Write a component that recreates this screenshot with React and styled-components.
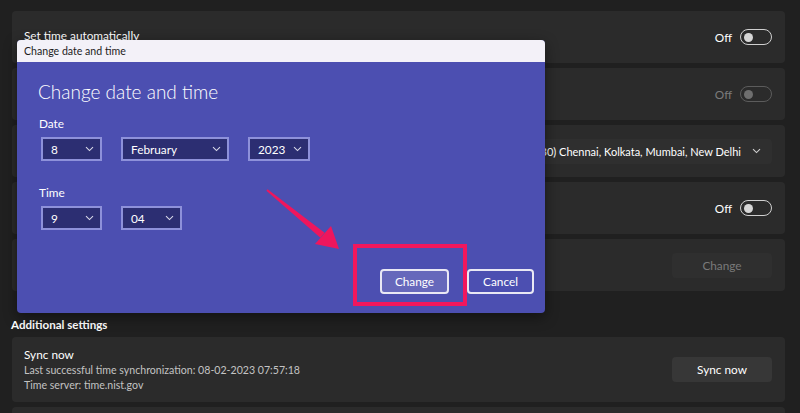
import React from "react";
import styled, { createGlobalStyle } from "styled-components";

const GlobalStyle = createGlobalStyle`
  html, body {
    margin: 0;
    padding: 0;
    background: #202020;
    width: 800px;
    height: 413px;
    overflow: hidden;
  }
  * {
    box-sizing: border-box;
  }
  body {
    font-family: Lato, "Noto Sans", sans-serif;
    color: #ffffff;
  }
`;

const Page = styled.div`
  position: relative;
  width: 800px;
  height: 413px;
  overflow: hidden;
  padding: 11px 15px 0 12px;
  display: flex;
  flex-direction: column;
  gap: 5px;
`;

const Card = styled.div`
  display: flex;
  align-items: center;
  justify-content: space-between;
  flex-shrink: 0;
  min-height: ${(p) => (p.$tall ? "65px" : "52px")};
  padding: 0 13px 0 12px;
  background: #2b2b2b;
  border-radius: 4px;
`;

const Label = styled.div`
  font-size: 11.8px;
  line-height: 16px;
  color: #ffffff;
  margin-top: ${(p) => (p.$offset ? p.$offset : "0")};
`;

const TextGroup = styled.div`
  display: flex;
  flex-direction: column;
`;

const SubText = styled.div`
  font-size: 10.6px;
  line-height: 15px;
  color: #c3c3c3;
`;

const ToggleRow = styled.div`
  display: flex;
  align-items: center;
  gap: 8px;
  margin-left: auto;
  font-size: 11.8px;
  color: ${(p) => (p.$disabled ? "#7b7b7b" : "#ffffff")};
`;

const Toggle = styled.div`
  width: 32px;
  height: 16px;
  border-radius: 8px;
  border: 1px solid ${(p) => (p.$disabled ? "#5c5c5c" : "#d0d0d0")};
  display: flex;
  align-items: center;
  padding-left: 3px;

  &::before {
    content: "";
    width: 9px;
    height: 9px;
    border-radius: 50%;
    background: ${(p) => (p.$disabled ? "#6e6e6e" : "#d6d6d6")};
  }
`;

const ZoneSelect = styled.div`
  display: flex;
  align-items: center;
  gap: 11px;
  height: 25px;
  margin-left: auto;
  padding: 0 11px 0 11px;
  background: #2f2f2f;
  border-radius: 4px;
  font-size: 11px;
  color: #ffffff;
  white-space: nowrap;
`;

const GreyButton = styled.div`
  width: 100px;
  height: 25px;
  margin-left: auto;
  display: flex;
  align-items: center;
  justify-content: center;
  border-radius: 4px;
  font-size: 11.8px;
  background: ${(p) => (p.$disabled ? "#2f2f2f" : "#373737")};
  color: ${(p) => (p.$disabled ? "#7a7a7a" : "#ffffff")};
`;

const SectionTitle = styled.div`
  font-size: 11.6px;
  font-weight: 700;
  color: #ffffff;
  margin: 21px 0 0 -1px;
  line-height: 15px;
`;

/* dialog */

const Dialog = styled.div`
  position: absolute;
  left: 17px;
  top: 40px;
  width: 528px;
  height: 273px;
  border-radius: 4px;
  overflow: hidden;
  display: flex;
  flex-direction: column;
  background: #4c4fb1;
  box-shadow: 0 4px 14px rgba(0, 0, 0, 0.45);
`;

const TitleBar = styled.div`
  height: 22px;
  flex-shrink: 0;
  background: #f3f1f8;
  color: #1c1c1c;
  font-size: 10.6px;
  display: flex;
  align-items: center;
  padding-left: 7px;
`;

const DialogBody = styled.div`
  flex: 1;
  display: flex;
  flex-direction: column;
  padding: 16px 11px 0 21px;
`;

const Heading = styled.div`
  font-size: 19px;
  font-weight: 300;
  line-height: 28px;
  color: #ffffff;
`;

const FieldLabel = styled.div`
  font-size: 11.8px;
  line-height: 16px;
  color: #ffffff;
  margin-top: ${(p) => p.$mt};
  margin-bottom: 5px;
  padding-left: 1px;
`;

const SelectRow = styled.div`
  display: flex;
  gap: 19px;
  padding-left: 3px;
`;

const Select = styled.div`
  width: ${(p) => p.$w}px;
  height: 24px;
  display: flex;
  align-items: center;
  justify-content: space-between;
  padding: 0 6px 0 8px;
  background: #2c2e72;
  border: 2px solid #8e91da;
  font-size: 11.8px;
  color: #ffffff;
`;

const ButtonRow = styled.div`
  margin-top: auto;
  margin-bottom: 19px;
  display: flex;
  justify-content: flex-end;
  gap: 18px;
`;

const DialogButton = styled.div`
  width: ${(p) => p.$w}px;
  height: 25px;
  display: flex;
  align-items: center;
  justify-content: center;
  border: 2px solid #e9e8f4;
  border-radius: 4px;
  font-size: 11.8px;
  color: #ffffff;
  background: ${(p) => (p.$primary ? "#6668bb" : "transparent")};
`;

/* annotation overlays */

const Highlight = styled.div`
  position: absolute;
  left: 353px;
  top: 244px;
  width: 114px;
  height: 62px;
  border: 4px solid #f1175d;
`;

const ArrowLayer = styled.svg`
  position: absolute;
  left: 0;
  top: 0;
  pointer-events: none;
`;

const Chevron = ({ color = "#d8d8e8" }) => (
  <svg width="9" height="6" viewBox="0 0 9 6">
    <polyline points="1,1.2 4.5,4.6 8,1.2" fill="none" stroke={color} strokeWidth="1.1" />
  </svg>
);

export default function App() {
  return (
    <>
      <GlobalStyle />
      <Page>
        <Card>
          <Label $offset="-2px">Set time automatically</Label>
          <ToggleRow>
            Off
            <Toggle />
          </ToggleRow>
        </Card>
        <Card>
          <ToggleRow $disabled>
            Off
            <Toggle $disabled />
          </ToggleRow>
        </Card>
        <Card>
          <ZoneSelect>
            (UTC+05:30) Chennai, Kolkata, Mumbai, New Delhi
            <Chevron color="#cfcfcf" />
          </ZoneSelect>
        </Card>
        <Card>
          <ToggleRow>
            Off
            <Toggle />
          </ToggleRow>
        </Card>
        <Card>
          <GreyButton $disabled>Change</GreyButton>
        </Card>

        <SectionTitle>Additional settings</SectionTitle>

        <Card $tall>
          <TextGroup>
            <Label>Sync now</Label>
            <SubText>Last successful time synchronization: 08-02-2023 07:57:18</SubText>
            <SubText>Time server: time.nist.gov</SubText>
          </TextGroup>
          <GreyButton>Sync now</GreyButton>
        </Card>
        <Card />

        <Dialog>
          <TitleBar>Change date and time</TitleBar>
          <DialogBody>
            <Heading>Change date and time</Heading>
            <FieldLabel $mt="10px">Date</FieldLabel>
            <SelectRow>
              <Select $w={61}>
                8
                <Chevron />
              </Select>
              <Select $w={108}>
                February
                <Chevron />
              </Select>
              <Select $w={62}>
                2023
                <Chevron />
              </Select>
            </SelectRow>
            <FieldLabel $mt="24px">Time</FieldLabel>
            <SelectRow>
              <Select $w={61}>
                9
                <Chevron />
              </Select>
              <Select $w={61}>
                04
                <Chevron />
              </Select>
            </SelectRow>
            <ButtonRow>
              <DialogButton $primary $w={69}>
                Change
              </DialogButton>
              <DialogButton $w={67}>Cancel</DialogButton>
            </ButtonRow>
          </DialogBody>
        </Dialog>

        <Highlight />
        <ArrowLayer width="800" height="413" viewBox="0 0 800 413">
          <polygon
            points="266.4,190.8 267.6,189.2 324.6,232.8 320.4,237.8"
            fill="#ee165d"
          />
          <polygon points="339,249 315,244 331,226" fill="#ee165d" />
        </ArrowLayer>
      </Page>
    </>
  );
}
